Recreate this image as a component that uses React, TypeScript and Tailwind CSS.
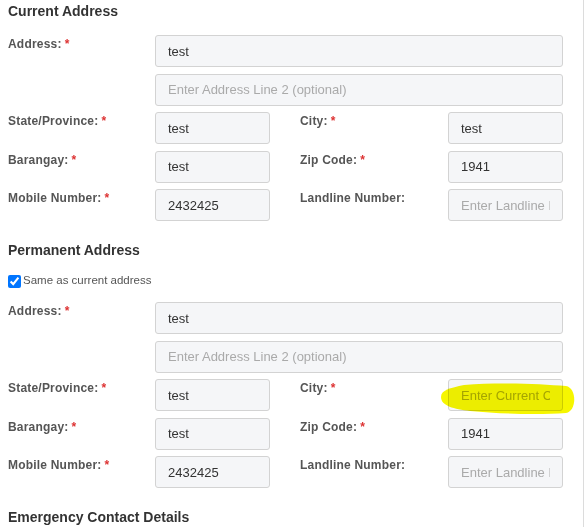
import React from "react";

type Field = { label: string; required?: boolean; value?: string; placeholder?: string; highlight?: boolean };

const Label = ({ text, required }: { text: string; required?: boolean }) => (
  <label className="pt-[1px] text-[12px] leading-4 font-bold text-[#555] tracking-[0.2px]">
    {text}
    {required && <span className="ml-[3px] text-[#d33]">*</span>}
  </label>
);

const Input = ({ value, placeholder, highlight }: { value?: string; placeholder?: string; highlight?: boolean }) => (
  <div className="relative">
    <input
      readOnly
      defaultValue={value}
      placeholder={placeholder}
      className="block h-8 w-full rounded-[3px] border border-[#d3d3d3] bg-[#f5f6f8] px-3 text-[13px] text-[#333] placeholder:text-[#aaa] outline-none"
    />
    {highlight && (
      <svg className="pointer-events-none absolute left-[-8px] top-[3px] mix-blend-multiply" width="140" height="34" viewBox="0 0 140 34">
        <path
          d="M1,15 C1,8 10,6 24,3 C60,0 100,2 126,4 C137,6 137,29 126,31 C100,33 60,32 30,29 C14,27 1,24 1,15 Z"
          fill="#f6f600"
        />
      </svg>
    )}
  </div>
);

const AddressBlock = ({ city, rows }: { city: Field; rows: [Field, Field][] }) => (
  <div className="grid grid-cols-[147px_115px_30px_148px_115px] gap-y-[6.5px]">
    <Label text="Address:" required />
    <div className="col-span-4">
      <Input value="test" />
    </div>
    <div />
    <div className="col-span-4">
      <Input placeholder="Enter Address Line 2 (optional)" />
    </div>
    {rows.map(([a, b], i) => {
      const right = i === 0 ? city : b;
      return (
        <React.Fragment key={a.label}>
          <Label text={a.label} required={a.required} />
          <Input value={a.value} placeholder={a.placeholder} />
          <div />
          <Label text={right.label} required={right.required} />
          <Input value={right.value} placeholder={right.placeholder} highlight={right.highlight} />
        </React.Fragment>
      );
    })}
  </div>
);

const rows: [Field, Field][] = [
  [{ label: "State/Province:", required: true, value: "test" }, { label: "City:", required: true }],
  [{ label: "Barangay:", required: true, value: "test" }, { label: "Zip Code:", required: true, value: "1941" }],
  [{ label: "Mobile Number:", required: true, value: "2432425" }, { label: "Landline Number:", placeholder: "Enter Landline Number" }],
];

export default function App() {
  return (
    <div className="h-[527px] w-[584px] overflow-hidden border-r border-[#dcdcdc] bg-white font-['Liberation_Sans',Arial,sans-serif]">
      <div className="pl-2 pr-5 pt-[1px]">
        <h3 className="text-[14px] leading-5 font-bold text-[#333]">Current Address</h3>
        <div className="mt-[14px]">
          <AddressBlock city={{ label: "City:", required: true, value: "test" }} rows={rows} />
        </div>

        <h3 className="mt-[19px] text-[14px] leading-5 font-bold text-[#333]">Permanent Address</h3>
        <div className="mt-[13px] flex h-4 items-center">
          <input type="checkbox" defaultChecked className="m-0 h-[13px] w-[13px]" />
          <span className="ml-[2px] text-[11.5px] text-[#555]">Same as current address</span>
        </div>
        <div className="mt-[13px]">
          <AddressBlock
            city={{ label: "City:", required: true, placeholder: "Enter Current City", highlight: true }}
            rows={rows}
          />
        </div>

        <h3 className="mt-[19px] text-[14px] leading-5 font-bold text-[#333]">Emergency Contact Details</h3>
      </div>
    </div>
  );
}
